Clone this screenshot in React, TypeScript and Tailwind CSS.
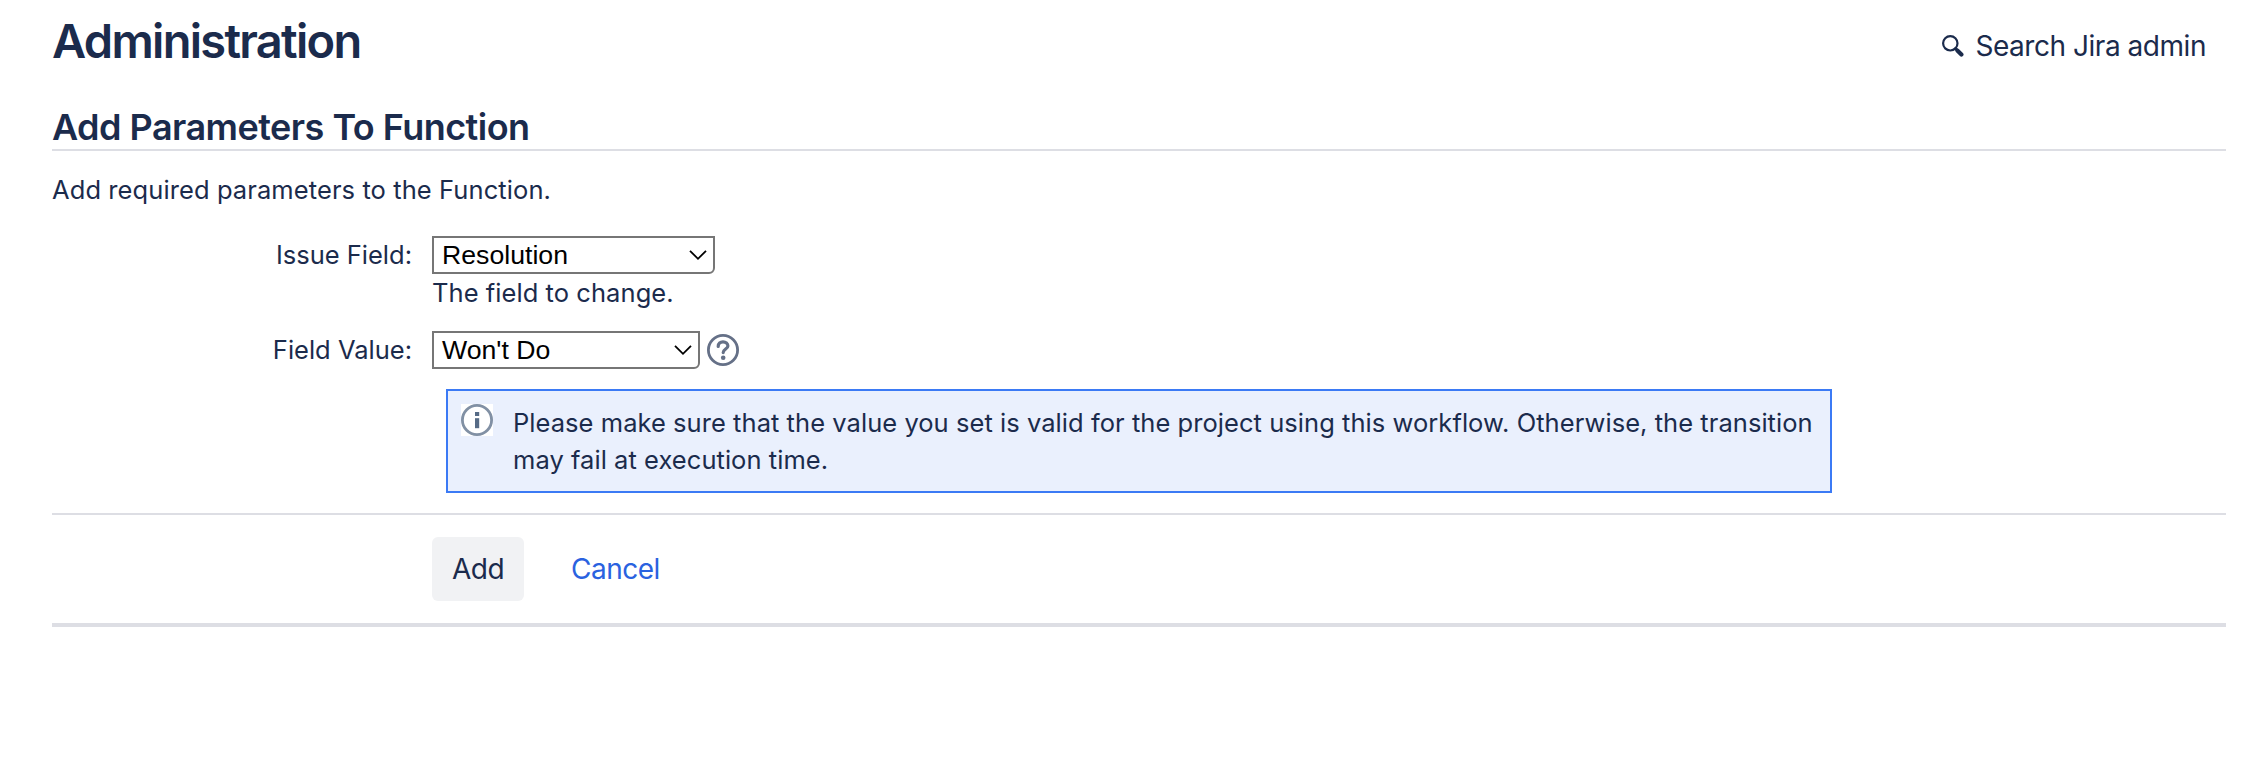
import type { ReactNode } from "react";

function SearchIcon() {
  return (
    <svg width="22" height="22" viewBox="0 0 22 22" fill="none" stroke="#1b2b4c" strokeLinecap="round">
      <circle cx="8.3" cy="8.3" r="7.2" strokeWidth="2.2" />
      <path d="M13.6 13.6L15.6 15.6" strokeWidth="3" />
      <path d="M15.6 15.8L19.4 19.6" strokeWidth="4.2" />
    </svg>
  );
}

function HelpIcon() {
  return (
    <svg width="32" height="32" viewBox="0 0 32 32" fill="none" stroke="#657087">
      <circle cx="16" cy="16" r="14.6" strokeWidth="2.8" />
      <path
        d="M11.2 12.4C11.2 9.4 13.3 7.8 16 7.8C18.8 7.8 20.9 9.5 20.9 12C20.9 15 16.2 15.2 16.2 18.6"
        strokeWidth="3.2"
        strokeLinecap="round"
      />
      <circle cx="16.2" cy="23.8" r="2.3" fill="#657087" stroke="none" />
    </svg>
  );
}

function InfoIcon() {
  return (
    <svg className="bg-white" width="32" height="32" viewBox="0 0 32 32">
      <circle cx="16" cy="16" r="14.6" fill="none" stroke="#8190a4" strokeWidth="2.8" />
      <rect x="14" y="8" width="4.2" height="4" fill="#566b86" />
      <rect x="14" y="14.2" width="4.2" height="10" fill="#566b86" />
    </svg>
  );
}

function SelectBox({ value, className }: { value: string; className: string }) {
  return (
    <div
      className={`flex h-[38px] items-center justify-between rounded-br-[6px] border-2 border-[#767676] bg-white pl-2 pr-[6px] ${className}`}
    >
      <span className="font-['Liberation_Sans',Arial,sans-serif] text-[26.67px] leading-[34px] text-black">{value}</span>
      <svg width="18" height="12" viewBox="0 0 18 12" fill="none" stroke="#000" strokeWidth="1.8">
        <path d="M1 1.8L9 9.8L17 1.8" />
      </svg>
    </div>
  );
}

function Label({ children }: { children: ReactNode }) {
  return <label className="w-[380px] pr-5 text-right leading-[38px]">{children}</label>;
}

export default function App() {
  return (
    <div className="h-[778px] w-[2252px] bg-white pl-[52px] pr-[26px] font-['Inter',sans-serif] text-[25.5px] text-[#1b2b4c]">
      <header className="flex items-start justify-between pt-[13px]">
        <h1 className="text-[47px] font-semibold leading-[56px] tracking-[-1.7px]">Administration</h1>
        <div className="flex items-start gap-[11px] pr-[20px] pt-[14px]">
          <div className="pt-2">
            <SearchIcon />
          </div>
          <span className="text-[28px] leading-[38px] tracking-[-0.46px]">Search Jira admin</span>
        </div>
      </header>

      <h2 className="mt-9 border-b-2 border-[#dddee4] text-[36px] font-semibold leading-[44px] tracking-[-0.53px]">
        Add Parameters To Function
      </h2>
      <p className="mt-[21px] leading-9 tracking-[0.09px]">Add required parameters to the Function.</p>

      {/* Fields */}
      <div className="mt-7 flex">
        <Label>Issue Field:</Label>
        <div>
          <SelectBox value="Resolution" className="w-[283px]" />
          <p className="pt-px leading-9 tracking-[0.06px]">The field to change.</p>
        </div>
      </div>
      <div className="mt-5 flex">
        <Label>Field Value:</Label>
        <SelectBox value="Won't Do" className="w-[268px]" />
        <div className="ml-[7px] pt-[3px]">
          <HelpIcon />
        </div>
      </div>

      <div className="ml-[394px] mt-5 flex h-[104px] w-[1386px] border-2 border-[#3b7af5] bg-[#eaf0fd] pl-[13px] pt-[13px]">
        <InfoIcon />
        <p className="ml-[20px] leading-[37px] tracking-[0.05px]">
          Please make sure that the value you set is valid for the project using this workflow. Otherwise, the transition
          <br />
          may fail at execution time.
        </p>
      </div>

      {/* Buttons */}
      <div className="mt-5 flex items-center border-b-4 border-t-2 border-b-[#dddee4] border-t-[#dddee4] py-[22px] pl-[380px] text-[28px] tracking-[-0.5px]">
        <button className="h-16 w-[92px] rounded-[6px] bg-[#f1f2f4]">Add</button>
        <a className="ml-[47px] text-[#2a62e0]">Cancel</a>
      </div>
    </div>
  );
}
